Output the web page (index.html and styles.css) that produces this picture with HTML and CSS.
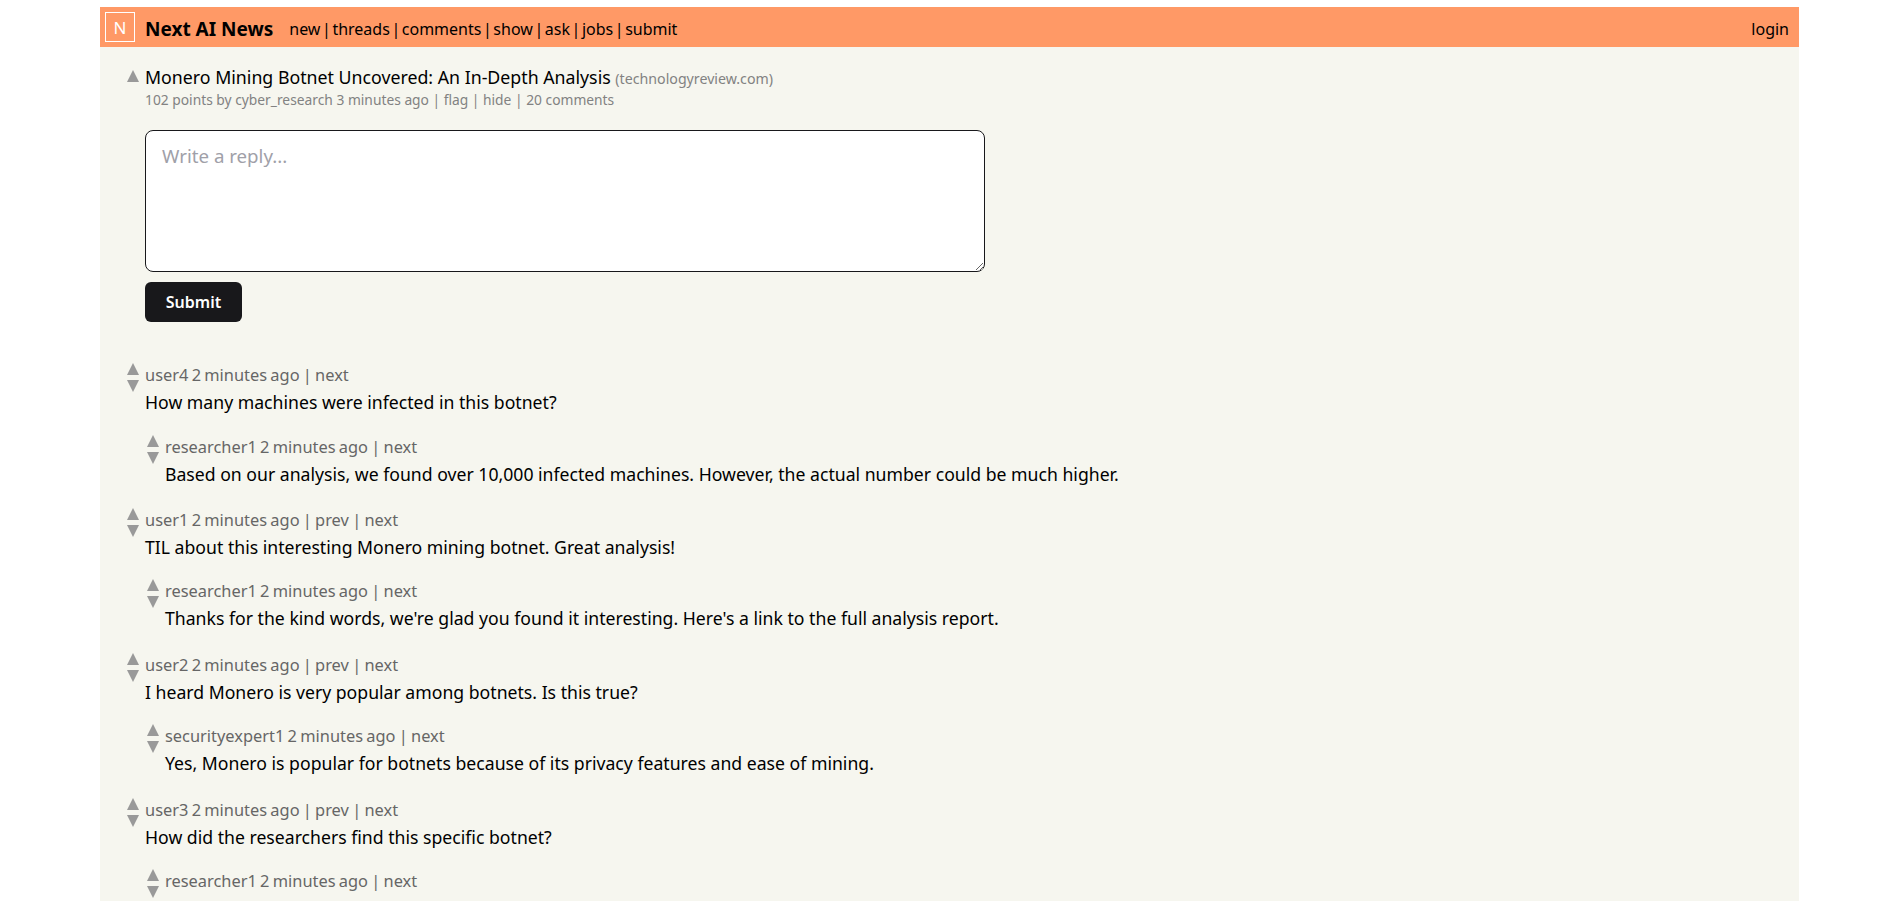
FILE: index.html
```html
<!DOCTYPE html>
<html>
<head>
    <title>Next AI News</title>
    <link rel="stylesheet" href="styles.css">
</head>
<body>
    <div class="page">
        <header class="topbar">
            <div class="logo">N</div>
            <b class="brand">Next AI News</b>
            <nav class="nav">new | threads | comments | show | ask | jobs | submit</nav>
            <div class="login">login</div>
        </header>

        <main class="content">
            <div class="story">
                <span class="arrow-up story-arrow"></span>
                <div>
                    <div class="story-title">Monero Mining Botnet Uncovered: An In-Depth Analysis <span class="domain">(technologyreview.com)</span></div>
                    <div class="story-meta">102 points by cyber_research 3 minutes ago | flag | hide | 20 comments</div>
                </div>
            </div>

            <form class="reply">
                <textarea placeholder="Write a reply..."></textarea>
                <button type="button">Submit</button>
            </form>

            <div class="comments">
                <div class="comment">
                    <div class="votes"><span class="arrow-up"></span><span class="arrow-down"></span></div>
                    <div>
                        <div class="meta">user4 2 minutes ago | next</div>
                        <div class="text">How many machines were infected in this botnet?</div>
                    </div>
                </div>
                <div class="comment child">
                    <div class="votes"><span class="arrow-up"></span><span class="arrow-down"></span></div>
                    <div>
                        <div class="meta">researcher1 2 minutes ago | next</div>
                        <div class="text">Based on our analysis, we found over 10,000 infected machines. However, the actual number could be much higher.</div>
                    </div>
                </div>
                <div class="comment">
                    <div class="votes"><span class="arrow-up"></span><span class="arrow-down"></span></div>
                    <div>
                        <div class="meta">user1 2 minutes ago | prev | next</div>
                        <div class="text">TIL about this interesting Monero mining botnet. Great analysis!</div>
                    </div>
                </div>
                <div class="comment child">
                    <div class="votes"><span class="arrow-up"></span><span class="arrow-down"></span></div>
                    <div>
                        <div class="meta">researcher1 2 minutes ago | next</div>
                        <div class="text">Thanks for the kind words, we're glad you found it interesting. Here's a link to the full analysis report.</div>
                    </div>
                </div>
                <div class="comment">
                    <div class="votes"><span class="arrow-up"></span><span class="arrow-down"></span></div>
                    <div>
                        <div class="meta">user2 2 minutes ago | prev | next</div>
                        <div class="text">I heard Monero is very popular among botnets. Is this true?</div>
                    </div>
                </div>
                <div class="comment child">
                    <div class="votes"><span class="arrow-up"></span><span class="arrow-down"></span></div>
                    <div>
                        <div class="meta">securityexpert1 2 minutes ago | next</div>
                        <div class="text">Yes, Monero is popular for botnets because of its privacy features and ease of mining.</div>
                    </div>
                </div>
                <div class="comment">
                    <div class="votes"><span class="arrow-up"></span><span class="arrow-down"></span></div>
                    <div>
                        <div class="meta">user3 2 minutes ago | prev | next</div>
                        <div class="text">How did the researchers find this specific botnet?</div>
                    </div>
                </div>
                <div class="comment child">
                    <div class="votes"><span class="arrow-up"></span><span class="arrow-down"></span></div>
                    <div>
                        <div class="meta">researcher1 2 minutes ago | next</div>
                    </div>
                </div>
            </div>
        </main>
    </div>
</body>
</html>
```

FILE: styles.css
```css
html, body {
    height: 901px;
    overflow: hidden;
}
body {
    margin: 0;
    background: #fff;
    font-family: "Noto Sans", sans-serif;
    color: #000;
}
.page {
    margin: 7px 99px 0 100px;
    background: #f6f6ef;
    height: 894px;
}
.topbar {
    display: flex;
    align-items: center;
    height: 40px;
    padding: 0 10px 0 5px;
    background: #ff9966;
    font-size: 16px;
}
.logo {
    width: 30px;
    height: 30px;
    box-sizing: border-box;
    border: 1px solid #fff;
    color: #fff;
    text-align: center;
    line-height: 29px;
    font-size: 17px;
}
.brand {
    margin-left: 10px;
    padding-top: 3px;
    font-size: 19px;
}
.nav {
    margin-left: 16px;
    padding-top: 3px;
    flex: 1;
    word-spacing: -2.6px;
}
.login {
    padding-top: 3px;
}
.content {
    padding: 19px 0 0 27px;
}
.story {
    display: flex;
    gap: 6px;
}
.story-arrow {
    margin-top: 4px;
}
.story-title {
    font-size: 17.75px;
    line-height: 23px;
}
.domain {
    font-size: 14.2px;
    color: #828282;
}
.story-meta {
    font-size: 13.8px;
    line-height: 20px;
    color: #828282;
}
.reply {
    margin: 20px 0 0 18px;
}
textarea {
    display: block;
    width: 840px;
    height: 142px;
    box-sizing: border-box;
    padding: 12px 16px;
    border: 1px solid #18181b;
    border-radius: 8px;
    background: #fff;
    font: 18.7px "Noto Sans", sans-serif;
}
textarea::placeholder {
    color: #a0a0a8;
}
button {
    display: block;
    margin-top: 10px;
    width: 97px;
    height: 40px;
    border: none;
    border-radius: 6px;
    background: #18181b;
    color: #fff;
    font: 600 16px "Noto Sans", sans-serif;
}
.comments {
    margin-top: 41px;
}
.comment {
    display: flex;
    gap: 6px;
    height: 71.6px;
}
.comment.child {
    margin-left: 20px;
    height: 73.3px;
}
.votes {
    display: flex;
    flex-direction: column;
    gap: 5px;
}
.arrow-up, .arrow-down {
    display: block;
    width: 0;
    height: 0;
    border-left: 6px solid transparent;
    border-right: 6px solid transparent;
}
.arrow-up {
    border-bottom: 12px solid #999;
}
.arrow-down {
    border-top: 12px solid #999;
}
.meta {
    font-size: 16.4px;
    line-height: 23px;
    word-spacing: -1px;
    color: #666;
}
.text {
    font-size: 17.65px;
    line-height: 24px;
    margin-top: 4px;
}
```
